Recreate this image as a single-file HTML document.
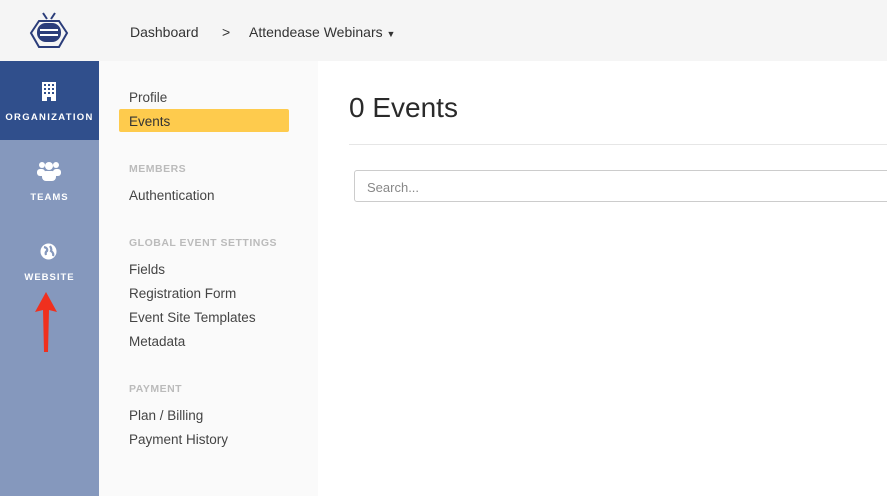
<!DOCTYPE html>
<html><head><style>
body{margin:0;width:887px;height:496px;overflow:hidden;font-family:"Liberation Sans",sans-serif;background:#fff;position:relative}
.top{position:absolute;left:0;top:0;width:887px;height:61px;background:#f5f5f5}
.side{position:absolute;left:0;top:61px;width:99px;height:435px;background:#8598bd}
.org{position:absolute;left:0;top:61px;width:99px;height:79px;background:#304f8c}
.lbl{position:absolute;width:99px;text-align:center;color:#fff;font-size:9.5px;font-weight:bold;letter-spacing:1px}
.nav{position:absolute;left:99px;top:61px;width:219px;height:435px;background:#fafafa}
.it{position:absolute;left:129px;font-size:13.5px;color:#444}
.hd{position:absolute;left:129px;font-size:10.5px;font-weight:bold;color:#bbb;letter-spacing:.5px}
.bc{position:absolute;top:24px;font-size:14px;color:#333}
</style></head><body>
<div class="top"></div>
<svg style="position:absolute;left:27px;top:11px" width="44" height="40" viewBox="0 0 44 40">
<g fill="none" stroke="#2b3d7a" stroke-width="2">
<path d="M16 2 L20 8 M28 2 L24 8"/>
<path d="M12 10 L32 10 L40 22 L32 36 L12 36 L4 22 Z"/>
<rect x="11" y="13" width="22" height="17" rx="8" fill="#2b3d7a"/>
</g>
<path d="M13 19 H31 M13 24 H31" stroke="#fff" stroke-width="2"/>
</svg>
<span class="bc" style="left:130px">Dashboard</span>
<span class="bc" style="left:222px">&gt;</span>
<span class="bc" style="left:249px">Attendease Webinars <span style="font-size:9px">▼</span></span>
<div class="side"></div>
<div class="org"></div>
<svg style="position:absolute;left:41px;top:82px" width="16" height="19"><rect x="1" y="0" width="14" height="19" fill="#fff"/><g fill="#304f8c"><rect x="3" y="2" width="2" height="2"/><rect x="7" y="2" width="2" height="2"/><rect x="11" y="2" width="2" height="2"/><rect x="3" y="6" width="2" height="2"/><rect x="7" y="6" width="2" height="2"/><rect x="11" y="6" width="2" height="2"/><rect x="3" y="10" width="2" height="2"/><rect x="7" y="10" width="2" height="2"/><rect x="11" y="10" width="2" height="2"/><rect x="6" y="15" width="4" height="4"/></g></svg>
<div class="lbl" style="top:112px;letter-spacing:1.3px">ORGANIZATION</div>
<svg style="position:absolute;left:37px;top:161px" width="24" height="20" fill="#fff"><circle cx="5" cy="4" r="3"/><circle cx="19" cy="4" r="3"/><circle cx="12" cy="5" r="4"/><rect x="0" y="8" width="8" height="7" rx="3"/><rect x="16" y="8" width="8" height="7" rx="3"/><rect x="5" y="10" width="14" height="10" rx="4"/></svg>
<div class="lbl" style="top:192px">TEAMS</div>
<svg style="position:absolute;left:40px;top:243px" width="17" height="17"><circle cx="8.5" cy="8.5" r="8" fill="#fff"/><path d="M4 4 Q8 5 7 8 Q5 9 6 12 M10 3 Q12 6 11 8 Q14 10 13 13" stroke="#8598bd" stroke-width="2.2" fill="none"/></svg>
<div class="lbl" style="top:272px">WEBSITE</div>
<svg style="position:absolute;left:34px;top:290px" width="24" height="64"><path d="M12 2 L23 22 L15 20 L14 62 L10 62 L9 20 L1 22 Z" fill="#f0301e"/></svg>
<div class="nav"></div>
<div class="it" style="top:90px">Profile</div>
<div style="position:absolute;left:119px;top:109px;width:170px;height:23px;background:#fecb4d;border-radius:2px"></div>
<div class="it" style="top:114px;color:#333">Events</div>
<div class="hd" style="top:163px">MEMBERS</div>
<div class="it" style="top:188px">Authentication</div>
<div class="hd" style="top:237px">GLOBAL EVENT SETTINGS</div>
<div class="it" style="top:262px">Fields</div>
<div class="it" style="top:286px">Registration Form</div>
<div class="it" style="top:310px">Event Site Templates</div>
<div class="it" style="top:334px">Metadata</div>
<div class="hd" style="top:383px">PAYMENT</div>
<div class="it" style="top:408px">Plan / Billing</div>
<div class="it" style="top:432px">Payment History</div>
<div style="position:absolute;left:349px;top:92px;font-size:28px;color:#2a2a2a">0 Events</div>
<div style="position:absolute;left:349px;top:144px;width:538px;height:1px;background:#e6e6e6"></div>
<div style="position:absolute;left:354px;top:170px;width:540px;height:32px;border:1px solid #ccc;border-radius:3px;box-sizing:border-box"></div>
<div style="position:absolute;left:367px;top:180px;font-size:13px;color:#888">Search...</div>
</body></html>
